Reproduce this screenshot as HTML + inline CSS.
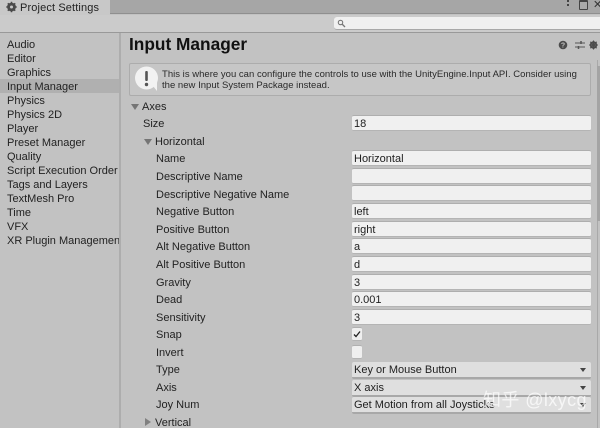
<!DOCTYPE html>
<html><head><meta charset="utf-8">
<style>
html,body{margin:0;padding:0}
body{width:600px;height:428px;position:relative;overflow:hidden;background:#c2c2c2;font-family:"Liberation Sans","Noto Sans CJK SC",sans-serif;font-size:11px;color:#1e1e1e}
#w{position:absolute;left:0;top:0;width:600px;height:428px;overflow:hidden;background:#c2c2c2;filter:blur(.35px)}
.a{position:absolute}
.t{position:absolute;white-space:nowrap;line-height:14px;height:14px;color:#222;margin-top:1px}
.f{position:absolute;left:352px;height:13px;padding-top:1px;background:#f0f0f0;border-top:1px solid #aeaeae;border-bottom:1px solid #b4b4b4;border-radius:2px;line-height:15px;padding-left:2px;box-sizing:content-box;width:237px;color:#1e1e1e}
.d{background:#dfdfdf;border-top:none;border-bottom:2px solid #a8a8a8;height:15px;padding-top:0;line-height:16px;padding-left:2px}
.c{position:absolute;left:352px;width:10px;height:12px;background:#efefef;border-top:1px solid #b0b0b0;border-bottom:1px solid #b4b4b4;border-radius:2px}
.ar{position:absolute;right:5px;top:6px;width:0;height:0;border-left:3.5px solid transparent;border-right:3.5px solid transparent;border-top:4px solid #444}
.tri{position:absolute;width:0;height:0;border-left:4px solid transparent;border-right:4px solid transparent;border-top:6px solid #757575}
.trr{position:absolute;width:0;height:0;border-top:4px solid transparent;border-bottom:4px solid transparent;border-left:6px solid #808080}
</style></head><body><div id="w">
<div class="a" style="left:0;top:0;width:600px;height:14px;background:#a6a6a6"></div>
<div class="a" style="left:110px;top:0;width:490px;height:14px;background:#a6a6a6;border-bottom:1px solid #8f8f8f;box-sizing:border-box"></div>
<div class="a" style="left:0;top:0;width:110px;height:15px;background:#c8c8c8"></div>
<svg class="a" style="left:5px;top:1px" width="14" height="12" viewBox="0 0 14 12"><circle cx="6.500" cy="6" r="3.300" fill="none" stroke="#4a4a4a" stroke-width="2.200"/><path d="M6.500 .8V11.200M1.300 6H11.700M2.800 2.300 10.200 9.700M10.200 2.300 2.800 9.700" stroke="#4a4a4a" stroke-width="1.500"/><circle cx="6.500" cy="6" r="1.500" fill="#c8c8c8"/></svg>
<div class="t" style="left:20px;top:0;font-size:11px;letter-spacing:.13px">Project Settings</div>
<div class="a" style="left:567px;top:0;width:2px;height:2px;background:#444;box-shadow:0 4px #444"></div>
<div class="a" style="left:579px;top:0;width:7px;height:7px;border:1px solid #444;border-top:2px solid #444;border-radius:1px;background:#aaa"></div>
<div class="t" style="left:593px;top:-3px;font-size:11px;color:#333">✕</div>

<div class="a" style="left:0;top:15px;width:600px;height:17px;background:#cbcbcb;border-bottom:1px solid #999"></div>
<div class="a" style="left:334px;top:17px;width:266px;height:12px;background:#f0f0f0;border-bottom:1px solid #a8a8a8;border-radius:3px 0 0 3px"></div>
<svg class="a" style="left:337px;top:19px" width="9" height="9" viewBox="0 0 9 9"><circle cx="3.500" cy="3.500" r="2.200" fill="none" stroke="#777" stroke-width="1.100"/><path d="M5 5 8 8" stroke="#777" stroke-width="1.300"/></svg>

<div class="a" style="left:119px;top:33px;width:2px;height:395px;background:#adadad"></div>
<div class="a" style="left:0;top:79px;width:119px;height:14px;background:#b0b0b0"></div>
<div class="t" style="left:7px;top:37px">Audio</div>
<div class="t" style="left:7px;top:51px">Editor</div>
<div class="t" style="left:7px;top:65px">Graphics</div>
<div class="t" style="left:7px;top:79px">Input Manager</div>
<div class="t" style="left:7px;top:93px">Physics</div>
<div class="t" style="left:7px;top:107px">Physics 2D</div>
<div class="t" style="left:7px;top:121px">Player</div>
<div class="t" style="left:7px;top:135px">Preset Manager</div>
<div class="t" style="left:7px;top:149px">Quality</div>
<div class="t" style="left:7px;top:163px">Script Execution Order</div>
<div class="t" style="left:7px;top:177px">Tags and Layers</div>
<div class="t" style="left:7px;top:191px">TextMesh Pro</div>
<div class="t" style="left:7px;top:205px">Time</div>
<div class="t" style="left:7px;top:219px">VFX</div>
<div class="a" style="left:7px;top:234px;width:112px;height:14px;overflow:hidden;white-space:nowrap;line-height:14px;color:#222">XR Plugin Management</div>

<div class="a" style="left:129px;top:33px;font-size:17.300px;font-weight:bold;line-height:22px;color:#111;white-space:nowrap">Input Manager</div>
<svg class="a" style="left:558px;top:39px" width="42" height="12" viewBox="0 0 42 12"><circle cx="5" cy="6" r="4.300" fill="#4c4c4c"/><text x="5" y="8.500" font-size="7" font-weight="bold" fill="#c2c2c2" text-anchor="middle" font-family="Liberation Sans">?</text><path d="M17 4H27M17 8H27" stroke="#555" stroke-width="1"/><path d="M23 2V5M20.500 7V10" stroke="#555" stroke-width="1.500"/><circle cx="35.500" cy="6" r="2.800" fill="none" stroke="#4c4c4c" stroke-width="1.800"/><path d="M35.500 1.500V10.500M31 6H40M32.300 2.800 38.700 9.200M38.700 2.800 32.300 9.200" stroke="#4c4c4c" stroke-width="1.100"/></svg>
<div class="a" style="left:597px;top:60px;width:1px;height:368px;background:#a9a9a9"></div>
<div class="a" style="left:597px;top:66px;width:3px;height:155px;background:#a4a4a4"></div>

<div class="a" style="left:129px;top:63px;width:462px;height:33px;box-sizing:border-box;background:#c6c6c6;border:1px solid #acacac;border-radius:2px"></div>
<svg class="a" style="left:133px;top:65px" width="28" height="28" viewBox="0 0 28 28"><circle cx="13.500" cy="13" r="11.500" fill="#f2f2f2"/><path d="M20 21 24 26 24 17Z" fill="#f2f2f2"/><rect x="12.200" y="6" width="2.600" height="10" rx="1" fill="#555"/><circle cx="13.500" cy="19.500" r="1.700" fill="#555"/></svg>
<div class="t" style="left:162px;top:67px;font-size:9.500px;letter-spacing:.02px;color:#2a2a2a">This is where you can configure the controls to use with the UnityEngine.Input API. Consider using</div>
<div class="t" style="left:162px;top:78px;font-size:9.500px;letter-spacing:.02px;color:#2a2a2a">the new Input System Package instead.</div>

<div class="tri" style="left:131px;top:104px"></div>
<div class="t" style="left:142px;top:99px">Axes</div>
<div class="t" style="left:143px;top:116px">Size</div>
<div class="f" style="top:115px">18</div>
<div class="tri" style="left:144px;top:139px"></div>
<div class="t" style="left:155px;top:134px">Horizontal</div>
<div class="t" style="left:156px;top:151px">Name</div>
<div class="f" style="top:150px">Horizontal</div>
<div class="t" style="left:156px;top:169px">Descriptive Name</div>
<div class="f" style="top:168px"></div>
<div class="t" style="left:156px;top:187px">Descriptive Negative Name</div>
<div class="f" style="top:185px"></div>
<div class="t" style="left:156px;top:204px">Negative Button</div>
<div class="f" style="top:203px">left</div>
<div class="t" style="left:156px;top:222px">Positive Button</div>
<div class="f" style="top:221px">right</div>
<div class="t" style="left:156px;top:239px">Alt Negative Button</div>
<div class="f" style="top:238px">a</div>
<div class="t" style="left:156px;top:257px">Alt Positive Button</div>
<div class="f" style="top:256px">d</div>
<div class="t" style="left:156px;top:275px">Gravity</div>
<div class="f" style="top:274px">3</div>
<div class="t" style="left:156px;top:292px">Dead</div>
<div class="f" style="top:291px">0.001</div>
<div class="t" style="left:156px;top:310px">Sensitivity</div>
<div class="f" style="top:309px">3</div>
<div class="t" style="left:156px;top:327px">Snap</div>
<div class="c" style="top:327px"></div>
<svg class="a" style="left:352px;top:328px" width="10" height="12" viewBox="0 0 10 12"><path d="M2 6.500 4 8.500 8 3.500" fill="none" stroke="#222" stroke-width="1.300"/></svg>
<div class="t" style="left:156px;top:345px">Invert</div>
<div class="c" style="top:345px"></div>
<div class="t" style="left:156px;top:362px">Type</div>
<div class="f d" style="top:362px">Key or Mouse Button<div class="ar"></div></div>
<div class="t" style="left:156px;top:380px">Axis</div>
<div class="f d" style="top:380px">X axis<div class="ar"></div></div>
<div class="t" style="left:156px;top:397px">Joy Num</div>
<div class="f d" style="top:397px">Get Motion from all Joysticks<div class="ar"></div></div>
<div class="trr" style="left:145px;top:418px"></div>
<div class="t" style="left:155px;top:415px">Vertical</div>
<div class="t" style="left:483px;top:389px;height:20px;line-height:20px;font-size:18px;letter-spacing:.4px;color:rgba(255,255,255,.72);font-family:'Liberation Sans','Noto Sans CJK SC',sans-serif">知乎 @lxycg</div>
</div></body></html>
